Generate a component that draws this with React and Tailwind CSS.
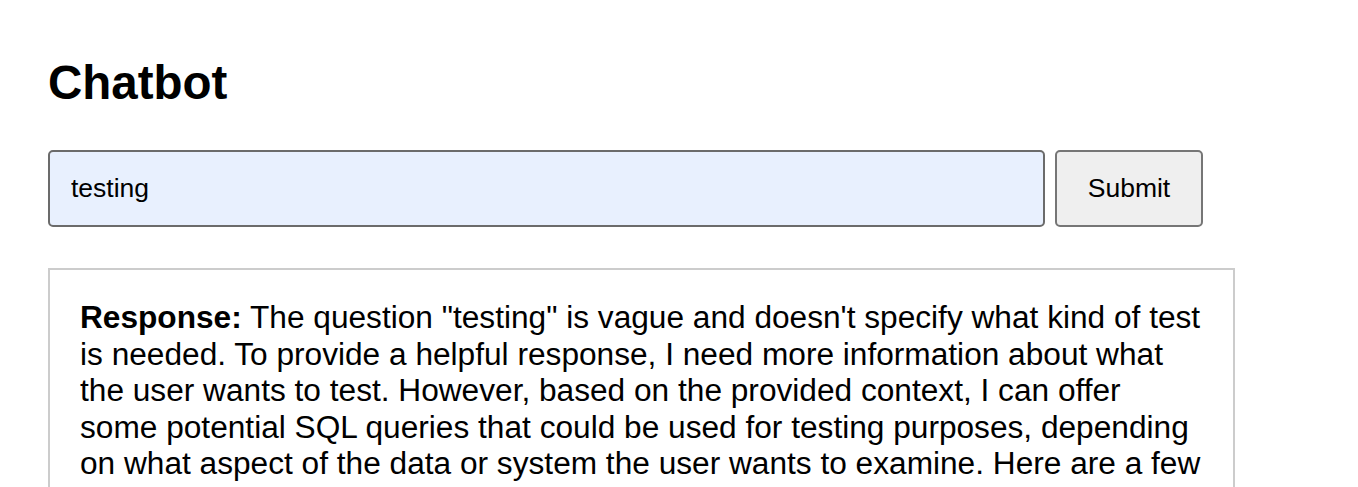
import React, { useState } from 'react';

const lines = [
    'is needed. To provide a helpful response, I need more information about what',
    'the user wants to test. However, based on the provided context, I can offer',
    'some potential SQL queries that could be used for testing purposes, depending',
    'on what aspect of the data or system the user wants to examine. Here are a few',
    'examples of queries that might be useful for testing.',
];

const App = () => {
    const [query, setQuery] = useState('testing');

    return (
        <div className="min-h-screen bg-white text-black font-['Liberation_Sans',Arial,sans-serif] pl-[48px] pr-[123px] pt-[56px]">
            <h1 className="text-[47.5px] font-bold leading-[54px] mb-[40px]">Chatbot</h1>

            <form onSubmit={e => e.preventDefault()} className="flex gap-[10px] w-[1155px] mb-[41px]">
                <input
                    type="text"
                    value={query}
                    onChange={e => setQuery(e.target.value)}
                    className="flex-1 h-[77px] bg-[#e8f0fe] border-2 border-[#6b6b6b] rounded-[5px] px-[21px] text-[26.5px] text-black focus:outline-none"
                />
                <button
                    type="submit"
                    className="w-[148px] h-[77px] bg-[#efefef] border-2 border-[#767676] rounded-[5px] text-[26.5px] text-black"
                >
                    Submit
                </button>
            </form>

            <div className="w-[1187px] border-2 border-[#cccccc] px-[30px] pt-[29px] pb-[30px] text-[31.65px] leading-[36.5px]">
                <p className="whitespace-nowrap">
                    <span className="block">
                        <span className="font-bold">Response:</span> The question "testing" is vague and doesn't specify what kind of test
                    </span>
                    {lines.map(l => (
                        <span key={l} className="block">{l}</span>
                    ))}
                </p>
            </div>
        </div>
    );
};

export default App;
